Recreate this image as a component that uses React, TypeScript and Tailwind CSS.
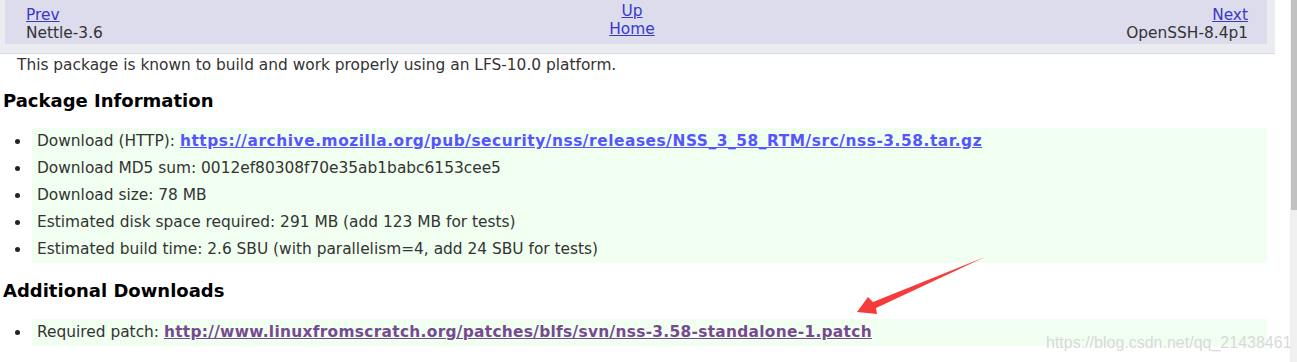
import React from "react";

const INFO = [
  { label: "Download (HTTP): ", link: "https://archive.mozilla.org/pub/security/nss/releases/NSS_3_58_RTM/src/nss-3.58.tar.gz" },
  { label: "Download MD5 sum: 0012ef80308f70e35ab1babc6153cee5" },
  { label: "Download size: 78 MB" },
  { label: "Estimated disk space required: 291 MB (add 123 MB for tests)" },
  { label: "Estimated build time: 2.6 SBU (with parallelism=4, add 24 SBU for tests)" },
];

function Row({ children }: { children: React.ReactNode }) {
  return (
    <li className="flex items-center h-[27px]">
      <span className="w-[32px] flex">
        <span className="ml-[15px] w-[5px] h-[5px] rounded-full bg-[#222]" />
      </span>
      <span className="flex-1 h-full bg-[#f0fff0] leading-[27px] pl-[5px] whitespace-nowrap">{children}</span>
    </li>
  );
}

export default function App() {
  return (
    <div className="relative flex w-[1297px] h-[362px] overflow-hidden bg-white font-['DejaVu_Sans',sans-serif] text-[15.4px] text-[#333]">
      <div className="w-[1275px] flex flex-col">
        {/* nav header */}
        <div className="bg-[#ebecf0] pl-[5px] pr-[8px] pb-[9px] border-b border-[#d5dcec]">
          <div className="h-[44px] bg-[#dcdcec] grid grid-cols-3 leading-[18px] px-[21px] pt-[6px]">
            <div>
              <a href="#" className="underline text-[#3838c8]">Prev</a>
              <div>Nettle-3.6</div>
            </div>
            <div className="flex flex-col items-center -mt-[4px] pr-[8px]">
              <a href="#" className="underline text-[#3838c8]">Up</a>
              <a href="#" className="underline text-[#3838c8]">Home</a>
            </div>
            <div className="flex flex-col items-end -mr-[2px]">
              <a href="#" className="underline text-[#3838c8]">Next</a>
              <div>OpenSSH-8.4p1</div>
            </div>
          </div>
        </div>

        <p className="pl-[17px] mt-[2px] leading-[18px]">
          This package is known to build and work properly using an LFS-10.0 platform.
        </p>

        <h2 className="pl-[3px] mt-[16px] text-[18px] leading-[22px] font-bold text-black">Package Information</h2>

        <ul className="mr-[8px] mt-[16px]">
          {INFO.map((it, i) => (
            <Row key={i}>
              {it.label}
              {it.link && (
                <a href="#" className="font-bold underline tracking-[0.55px] text-[#5555ff]">{it.link}</a>
              )}
            </Row>
          ))}
        </ul>

        <h2 className="pl-[3px] mt-[17px] text-[18px] leading-[22px] font-bold text-black">Additional Downloads</h2>

        <ul className="mr-[8px] mt-[17px]">
          <Row>
            Required patch:{" "}
            <a href="#" className="font-bold underline tracking-[0.3px] text-[#774a90]">
              http://www.linuxfromscratch.org/patches/blfs/svn/nss-3.58-standalone-1.patch
            </a>
          </Row>
        </ul>
      </div>

      <div className="w-[15px]" />
      <div className="w-[7px] bg-[#f0f0f0] flex flex-col">
        <div className="h-[210px] bg-[#c1c1c1] ml-[1px]" />
      </div>

      {/* annotation arrow */}
      <svg className="absolute left-0 top-0 pointer-events-none" width="1297" height="362">
        <polygon
          points="857,312 868,297 873,302 985,257 876,308 877,314"
          fill="#f53b3b"
        />
      </svg>

      {/* watermark */}
      <div className="absolute left-[1046px] top-[334px] font-['Liberation_Sans',sans-serif] text-[16px] leading-[18px] text-[#d9d9d9]">
        https://blog.csdn.net/qq_21438461
      </div>
    </div>
  );
}
